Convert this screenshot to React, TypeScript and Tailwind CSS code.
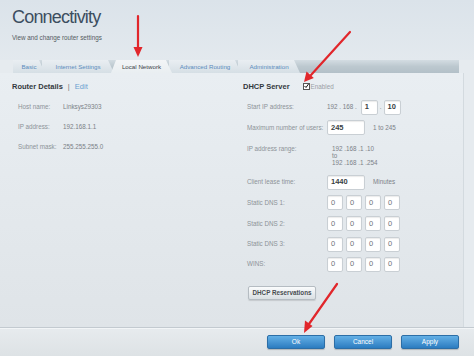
import React from 'react';

const font = { fontFamily: '"Liberation Sans", Arial, sans-serif' };

const tabs = [
  { label: 'Basic', w: 'w-[32px]' },
  { label: 'Internet Settings', w: 'w-[72px]' },
  { label: 'Local Network', w: 'w-[61px]', active: true },
  { label: 'Advanced Routing', w: 'w-[72px]' },
  { label: 'Administration', w: 'w-[62px]' },
];

function Box({ v, w = 'w-[16px]', light }: { v: string; w?: string; light?: boolean }) {
  return (
    <div
      className={`${w} h-[15px] bg-white border border-[#c9cfd4] rounded-[2px] shadow-[inset_0_1px_1px_rgba(0,0,0,0.08)] flex items-center pl-[3px] text-[7.5px] ${
        light ? 'text-[#6d7378]' : 'font-bold text-[#3a3f44]'
      }`}
    >
      {v}
    </div>
  );
}

function Octets() {
  return (
    <div className="flex gap-[3px]">
      <Box v="0" light />
      <Box v="0" light />
      <Box v="0" light />
      <Box v="0" light />
    </div>
  );
}

function Row({ label, h, children }: { label: string; h: string; children: React.ReactNode }) {
  return (
    <div className={`flex ${h} items-center`}>
      <div className="w-[84px] pl-[4px] text-[6.3px] text-[#8d9398]">{label}</div>
      <div className="flex items-center">{children}</div>
    </div>
  );
}

export default function App() {
  return (
    <div
      className="relative w-[474px] h-[356px] overflow-hidden bg-[#e6ebef] flex flex-col"
      style={font}
    >
      {/* Header */}
      <div className="h-[60px] shrink-0 bg-gradient-to-b from-[#dbe3ea] to-[#e3e9ee] pl-[12px] pt-[7px]">
        <div className="text-[18px] leading-[21px] tracking-[-0.8px] text-[#3c4e60]">Connectivity</div>
        <div className="mt-[5px] text-[6.3px] text-[#545b62]">View and change router settings</div>
      </div>

      {/* Tab strip */}
      <div className="ml-[13px] w-[446px] h-[13px] shrink-0 flex bg-gradient-to-b from-[#d3dce2] via-[#bcc8cf] to-[#b3c0c8]">
        {tabs.map((t, i) => (
          <div
            key={t.label}
            className={`${t.w} ${i > 0 ? '-ml-[3px]' : ''} h-full flex items-center justify-center text-[6.2px] ${
              t.active
                ? 'bg-gradient-to-b from-[#f3f5f7] to-[#e9eef1] text-[#3d4247] [clip-path:polygon(5px_0,calc(100%-6px)_0,100%_100%,0_100%)] z-10'
                : 'bg-gradient-to-b from-[#e9eef2] to-[#d6dfe5] text-[#5b8cbd] [clip-path:polygon(0_0,calc(100%-6px)_0,100%_100%,0_100%)]'
            }`}
          >
            {t.label}
          </div>
        ))}
      </div>

      {/* Content */}
      <div className="flex-1 flex border-r border-[#d3dadf] w-[464px] bg-gradient-to-b from-[#e9eef2] to-[#dfe4e8]">
        {/* Router details */}
        <div className="w-[243px] pl-[12px] pt-[7px]">
          <div className="h-[13px] flex items-center text-[7.5px] font-bold text-[#33383d]">
            Router Details
            <span className="mx-[5px] font-normal text-[#777]">|</span>
            <span className="font-normal text-[#6a9fd0]">Edit</span>
          </div>
          <div className="mt-[4px] pl-[6px] text-[6.3px]">
            {[
              ['Host name:', 'Linksys29303'],
              ['IP address:', '192.168.1.1'],
              ['Subnet mask:', '255.255.255.0'],
            ].map(([l, v]) => (
              <div key={l} className="h-[20px] flex items-center">
                <div className="w-[45px] text-[#8d9398]">{l}</div>
                <div className="text-[#7b8187]">{v}</div>
              </div>
            ))}
          </div>
        </div>

        {/* DHCP server */}
        <div className="flex-1 pt-[7px]">
          <div className="h-[13px] flex items-center text-[7.5px] font-bold text-[#33383d]">
            DHCP Server
            <div className="ml-[13px] w-[7px] h-[7px] border border-[#555] bg-white flex items-center justify-center">
              <svg viewBox="0 0 10 10" className="w-[8px] h-[8px] -mt-[1px]">
                <path d="M1 5 L4 8 L9 1" fill="none" stroke="#111" strokeWidth="2" />
              </svg>
            </div>
            <span className="ml-[1px] font-normal text-[6.3px] text-[#9aa0a5]">Enabled</span>
          </div>
          <div className="mt-[4px] text-[6.3px] text-[#7b8187]">
            <Row label="Start IP address:" h="h-[20px]">
              <span className="mr-[4px]">192 . 168 .</span>
              <Box v="1" w="w-[17px]" />
              <span className="mx-[2px]">.</span>
              <Box v="10" w="w-[17px]" />
            </Row>
            <Row label="Maximum number of users:" h="h-[21px]">
              <Box v="245" w="w-[38px]" />
              <span className="ml-[8px]">1 to 245</span>
            </Row>
            <div className="flex h-[34px] pt-[7px]">
              <div className="w-[84px] pl-[4px] text-[6.3px] text-[#8d9398] leading-[7px]">IP address range:</div>
              <div className="pl-[5px] leading-[7px]">
                <div>192 .168 .1 .10</div>
                <div>to</div>
                <div>192 .168 .1 .254</div>
              </div>
            </div>
            <Row label="Client lease time:" h="h-[20px]">
              <Box v="1440" w="w-[38px]" />
              <span className="ml-[8px]">Minutes</span>
            </Row>
            <Row label="Static DNS 1:" h="h-[21px]">
              <Octets />
            </Row>
            <Row label="Static DNS 2:" h="h-[21px]">
              <Octets />
            </Row>
            <Row label="Static DNS 3:" h="h-[20px]">
              <Octets />
            </Row>
            <Row label="WINS:" h="h-[20px]">
              <Octets />
            </Row>
          </div>
          <button className="mt-[12px] ml-[5px] w-[68px] h-[14px] rounded-[2px] border border-[#b5bcc2] bg-gradient-to-b from-[#fbfcfd] to-[#d9dfe3] shadow-[0_1px_1px_rgba(0,0,0,0.12)] text-[6.3px] text-[#474c51] font-bold">
            DHCP Reservations
          </button>
        </div>
      </div>

      {/* Footer */}
      <div className="h-[29px] shrink-0 border-t border-[#c3cad0] shadow-[inset_0_1px_0_#f2f5f7] bg-gradient-to-b from-[#e7ebee] to-[#dde2e5] flex items-center gap-[9px] pl-[267px] pb-[1px]">
        {['Ok', 'Cancel', 'Apply'].map((b) => (
          <button
            key={b}
            className="w-[58px] h-[14px] rounded-[2px] border border-[#2c6ea6] bg-gradient-to-b from-[#63b0e6] to-[#2b7cc0] text-[6.5px] text-white shadow-[0_1px_1px_rgba(0,0,0,0.2)]"
          >
            {b}
          </button>
        ))}
      </div>

      {/* Red annotation arrows */}
      <svg className="absolute inset-0 pointer-events-none" width="474" height="356" viewBox="0 0 474 356">
        <g stroke="#e1262b" strokeWidth="2.2" strokeLinecap="round" fill="#e1262b">
          <line x1="138" y1="16" x2="138" y2="48" />
          <polygon points="133.5,47 142.5,47 138,57" stroke="none" />
          <line x1="350" y1="32" x2="311" y2="75" />
          <polygon points="306.5,71.5 313.8,78 304,82" stroke="none" />
          <line x1="337" y1="284" x2="309" y2="324" />
          <polygon points="305,320.5 312.5,326 304,333" stroke="none" />
        </g>
      </svg>
    </div>
  );
}
